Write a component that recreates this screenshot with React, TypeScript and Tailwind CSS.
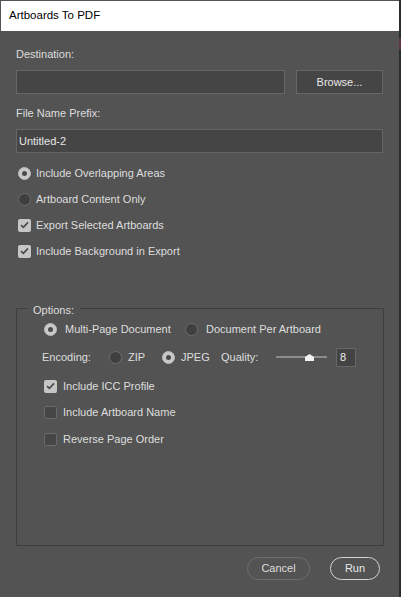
import React from "react";

const FONT = { fontFamily: '"Liberation Sans", Arial, sans-serif' };

function Radio({ on }: { on?: boolean }) {
  if (on) {
    return (
      <span className="flex h-[13px] w-[13px] shrink-0 items-center justify-center rounded-full border border-[#bcbcbc] bg-[#c9c9c9]">
        <span className="h-[5px] w-[5px] rounded-full bg-[#4b4b4b]" />
      </span>
    );
  }
  return <span className="h-[13px] w-[13px] shrink-0 rounded-full border border-[#6c6c6c] bg-[#3f3f3f]" />;
}

function Check({ on }: { on?: boolean }) {
  if (on) {
    return (
      <span className="flex h-[13px] w-[13px] shrink-0 items-center justify-center rounded-[2px] bg-[#c6c6c6]">
        <svg width="9" height="8" viewBox="0 0 9 8">
          <path d="M1 4.2 L3.4 6.4 L8 1.4" fill="none" stroke="#4a4a4a" strokeWidth="1.6" />
        </svg>
      </span>
    );
  }
  return <span className="h-[13px] w-[13px] shrink-0 rounded-[2px] border border-[#6a6a6a] bg-[#464646]" />;
}

function OptionRow({
  control,
  label,
  gap,
}: {
  control: React.ReactNode;
  label: string;
  gap: string;
}) {
  return (
    <div className={`flex items-center ${gap}`}>
      {control}
      <span>{label}</span>
    </div>
  );
}

export default function App() {
  return (
    <div className="flex h-[597px] w-[401px] bg-[#2c2c2c] text-[11px] text-[#dedede]" style={FONT}>
      <div className="flex h-full w-[399px] flex-col bg-[#535353] pl-px pt-px">
        {/* title bar */}
        <div className="flex h-[30px] items-center bg-white pl-[8px] text-[11.5px] text-black">
          Artboards To PDF
        </div>

        <div className="flex w-[383px] flex-col pl-[15px] pt-[15px]">
          <div className="h-[16px] leading-[16px]">Destination:</div>
          <div className="mt-[8px] flex h-[24px]">
            <div className="w-[269px] border border-[#666] bg-[#454545]" />
            <button className="ml-[11px] w-[87px] border border-[#666] bg-[#454545] text-[#e8e8e8]">
              Browse...
            </button>
          </div>

          <div className="mt-[11px] h-[16px] leading-[16px]">File Name Prefix:</div>
          <div className="mt-[8px] flex h-[24px] w-[367px] items-center border border-[#666] bg-[#454545] pl-[2px] text-[#e8e8e8]">
            Untitled-2
          </div>

          <div className="mt-[7px] flex flex-col pl-[2px]">
            <div className="flex h-[26px] items-center">
              <OptionRow control={<Radio on />} label="Include Overlapping Areas" gap="gap-[5px]" />
            </div>
            <div className="flex h-[26px] items-center">
              <OptionRow control={<Radio />} label="Artboard Content Only" gap="gap-[5px]" />
            </div>
            <div className="flex h-[26px] items-center">
              <OptionRow control={<Check on />} label="Export Selected Artboards" gap="gap-[5px]" />
            </div>
            <div className="flex h-[26px] items-center">
              <OptionRow control={<Check on />} label="Include Background in Export" gap="gap-[5px]" />
            </div>
          </div>

          {/* options group */}
          <div className="relative mt-[44px] flex h-[238px] w-[368px] flex-col border border-[#3e3e3e] pl-[27px] pt-[10px]">
            <span className="absolute left-[10px] top-[-7px] bg-[#535353] px-[6px] leading-[16px]">
              Options:
            </span>

            <div className="flex h-[20px] items-center">
              <div className="w-[141px]">
                <OptionRow control={<Radio on />} label="Multi-Page Document" gap="gap-[8px]" />
              </div>
              <OptionRow control={<Radio />} label="Document Per Artboard" gap="gap-[8px]" />
            </div>

            <div className="mt-[8px] flex h-[20px] items-center">
              <span className="ml-[-2px] w-[67px]">Encoding:</span>
              <div className="w-[53px]">
                <OptionRow control={<Radio />} label="ZIP" gap="gap-[6px]" />
              </div>
              <div className="w-[59px]">
                <OptionRow control={<Radio on />} label="JPEG" gap="gap-[6px]" />
              </div>
              <span className="w-[55px]">Quality:</span>
              <div className="relative flex h-[20px] w-[51px] items-center">
                <div className="h-[2px] w-full bg-[#8c8c8c]" />
                <svg className="absolute left-[29px] top-[7px]" width="9" height="7" viewBox="0 0 9 7">
                  <polygon points="0,7 0,3 4.5,0 9,3 9,7" fill="#f2f2f2" />
                </svg>
              </div>
              <div className="ml-[9px] flex h-[19px] w-[20px] items-center border border-[#666] bg-[#434343] pl-[3px] text-[#ececec]">
                8
              </div>
            </div>

            <div className="mt-[9px] flex h-[20px] items-center">
              <OptionRow control={<Check on />} label="Include ICC Profile" gap="gap-[6px]" />
            </div>
            <div className="mt-[6px] flex h-[20px] items-center">
              <OptionRow control={<Check />} label="Include Artboard Name" gap="gap-[6px]" />
            </div>
            <div className="mt-[7px] flex h-[20px] items-center">
              <OptionRow control={<Check />} label="Reverse Page Order" gap="gap-[6px]" />
            </div>
          </div>

          <div className="mt-[11px] flex w-[364px] justify-end gap-[20px]">
            <button className="h-[23px] w-[63px] rounded-full border border-[#6e6e6e] text-[#dedede]">
              Cancel
            </button>
            <button className="h-[23px] w-[50px] rounded-full border border-[#d2d2d2] text-[#e8e8e8]">
              Run
            </button>
          </div>
        </div>
      </div>
      <div className="flex w-[2px] flex-col">
        <div className="h-[38px] bg-[#2c2c2c]" />
        <div className="h-[12px] bg-[#5e3a40]" />
      </div>
    </div>
  );
}
